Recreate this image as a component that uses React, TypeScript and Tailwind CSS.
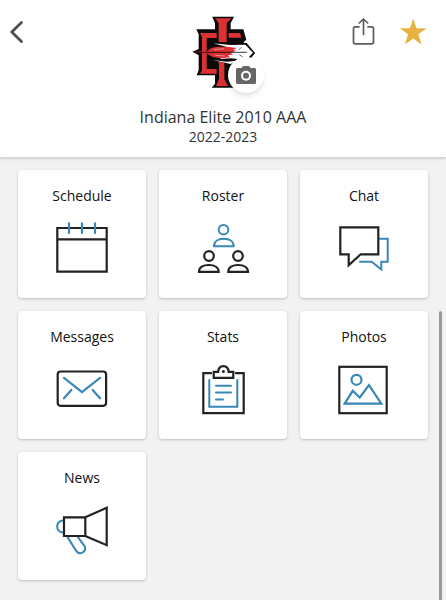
import React from 'react';

type Tile = {
  label: string;
  href: string;
  icon: React.ReactNode;
};

const BLUE = '#3a87b7';

const tiles: Tile[] = [
  {
    label: 'Schedule',
    href: '#schedule',
    icon: (
      <>
        <path d="M5.3 10H54.7V53.7H5.3ZM5.3 21.3H54.7" />
        <path d="M17 5.3V15M30 5.3V15M43 5.3V15" stroke={BLUE} />
      </>
    ),
  },
  {
    label: 'Roster',
    href: '#roster',
    icon: (
      <>
        <g stroke={BLUE} strokeWidth="2">
          <circle cx="30.5" cy="11.7" r="4.8" />
          <path d="M21 28.2C21 23.5 25 20.8 30.8 20.8S40.7 23.5 40.7 28.2Z" />
        </g>
        <circle cx="16" cy="38" r="4.8" />
        <path d="M6 53.8C6 49.5 10 47 15.9 47S25.7 49.5 25.7 53.8Z" />
        <circle cx="45" cy="38" r="4.8" />
        <path d="M35.3 53.8C35.3 49.5 39.3 47 45.2 47S55 49.5 55 53.8Z" />
      </>
    ),
  },
  {
    label: 'Chat',
    href: '#chat',
    icon: (
      <>
        <path d="M45.5 20.7H53.7V43.7H47.3V51.5L37.7 43.7H26" stroke={BLUE} strokeWidth="2" />
        <path d="M6.3 9.3H44.3V36.3H26.7L14.7 47.3V36.3H6.3Z" />
      </>
    ),
  },
  {
    label: 'Messages',
    href: '#messages',
    icon: (
      <>
        <rect x="5.7" y="12.5" width="48.4" height="34.3" rx="3" />
        <path d="M12 18.8L30 33L48 18.8M19.3 31L12 39.3M40.7 31L48 39.3" stroke={BLUE} />
      </>
    ),
  },
  {
    label: 'Stats',
    href: '#stats',
    icon: (
      <>
        <path d="M18 14.2H10.3V54.2H50.7V14.2H43" />
        <path d="M20.7 12.8H25.2C25.4 9.5 27.4 7.2 30.4 7.2S35.4 9.5 35.6 12.8H40.3V18.8H20.7Z" />
        <circle cx="30.4" cy="12.6" r="1.5" fill="#222" stroke="none" />
        <path d="M16.3 21V47.8H44.3V21M23 26.8H38M23 33.5H38M23 40.5H30" stroke={BLUE} strokeWidth="2" />
      </>
    ),
  },
  {
    label: 'Photos',
    href: '#photos',
    icon: (
      <>
        <rect x="5.3" y="7.8" width="47.4" height="46.4" />
        <circle cx="22.5" cy="20.8" r="5" stroke={BLUE} />
        <path d="M10.7 44.7L18.7 31.8L25.7 38.5L35 26.2L47.3 44.7Z" stroke={BLUE} />
      </>
    ),
  },
  {
    label: 'News',
    href: '#news',
    icon: (
      <>
        <path d="M10.8 20.4C7 21 5.2 23.5 5.2 26.4S7 31.8 10.8 32.4" stroke={BLUE} strokeWidth="2" />
        <path d="M15.7 37.4L24 50.6C27.5 56 35.5 51.5 32.7 46.4L25.8 36.8" stroke={BLUE} strokeWidth="2" />
        <path d="M12 17.3H33.3V36H12ZM33.3 17.3L54.7 7.8V45.2L33.3 36" />
      </>
    ),
  },
];

function TeamLogo() {
  return (
    <svg viewBox="30 30 198 222" className="h-[74px] w-[66px]" role="img" aria-label="Team logo">
      <path
        fill="#0c0a0a"
        d="M97 35H162L152 55V73H190L199 104L190 112L224 144L205 168L198 192L192 210H152V236L162 248H95L105 236V211H50L56 195V151L37 140L56 132V88L49 73H105V55Z"
      />
      {/* letters */}
      <path
        fill="#dc3033"
        d="M106 40H154L140 55V114H133V222L144 243H108L117 222V176H116V55ZM60 84H110V99H80V192H110V206H60L66 196V96ZM146 84H180L184 98H146Z"
      />
      {/* feather */}
      <path fill="#0c0a0a" d="M86 130L98 110L200 114L225 144L204 170L150 178L84 162Z" />
      <path fill="#fff" d="M100 115L150 120L196 119L219 143L204 159L180 163L152 160L120 162L150 128Z" />
      <path fill="#fff" d="M98 165L140 170L172 167L152 177Z" />
      <path
        fill="#dc3033"
        d="M40 141L82 138L94 129L112 125L148 126L170 129L160 134L168 137L152 143L159 149L144 150L150 157L124 160L98 156L82 146Z"
      />
      <path stroke="#0c0a0a" strokeWidth="2.5" fill="none" d="M50 142L200 142" />
      <path stroke="#f4b9b9" strokeWidth="2" fill="none" d="M102 134L132 131M106 151L134 153" />
      <path stroke="#0c0a0a" strokeWidth="2" fill="none" d="M176 135L184 127M178 149L188 156" />
    </svg>
  );
}

function Header() {
  return (
    <header className="border-b border-[#d4d4d4] bg-white px-1 pt-[15px] pb-3 shadow-sm">
      <div className="grid grid-cols-[1fr_auto_1fr] items-start">
        <button type="button" aria-label="Back" className="mt-[5px] justify-self-start">
          <svg viewBox="0 0 24 24" className="size-6" fill="none" stroke="#505050" strokeWidth="2.8" strokeLinecap="round" strokeLinejoin="round">
            <path d="M17.5 2.5L7.7 12L17.5 21.5" />
          </svg>
        </button>

        <div className="relative">
          <TeamLogo />
          <button
            type="button"
            aria-label="Change team photo"
            className="absolute top-[42px] left-[38px] flex size-9 items-center justify-center rounded-full bg-white shadow-md"
          >
            <svg viewBox="0 0 22 20" className="h-5 w-[22px]">
              <path fill="#666" d="M6.5 3L8 1H14L15.5 3H19.5Q21 3 21 4.5V17.5Q21 19 19.5 19H2.5Q1 19 1 17.5V4.5Q1 3 2.5 3Z" />
              <circle cx="11" cy="10.8" r="5" fill="#fff" />
              <circle cx="11" cy="10.8" r="3" fill="#666" />
            </svg>
          </button>
        </div>

        <div className="mt-0.5 flex gap-5 justify-self-end pr-3.5">
          <button type="button" aria-label="Share">
            <svg viewBox="0 0 30 30" className="size-[30px]" fill="none" stroke="#5c5c5c" strokeWidth="1.7" strokeLinecap="round" strokeLinejoin="round">
              <path d="M11 9.8H7.5Q5.5 9.8 5.5 11.8V24.8Q5.5 26.8 7.5 26.8H23.5Q25.5 26.8 25.5 24.8V11.8Q25.5 9.8 23.5 9.8H20" />
              <path d="M15.5 17.5V2M11.3 6L15.5 2L19.7 6" />
            </svg>
          </button>
          <button type="button" aria-label="Favorite">
            <svg viewBox="0 0 30 30" className="size-[30px]">
              <path fill="#e6b33f" d="M15.2 1.5L18.4 11.2H28.6L20.4 17.3L23.5 27.5L15.2 21.4L6.9 27.5L10 17.3L1.8 11.2H12Z" />
            </svg>
          </button>
        </div>
      </div>

      <div className="mt-4 text-center text-[#333]">
        <h1 className="text-base leading-6">Indiana Elite 2010 AAA</h1>
        <p className="text-sm leading-4">2022-2023</p>
      </div>
    </header>
  );
}

export default function App() {
  return (
    <div className="relative min-h-screen bg-[#f2f2f2] font-['Open_Sans','Noto_Sans',sans-serif]">
      <Header />

      <main className="px-[18px] pt-3 pb-5">
        <nav className="grid grid-cols-3 gap-[13px]">
          {tiles.map((tile) => (
            <a
              key={tile.label}
              href={tile.href}
              className="flex aspect-square flex-col items-center gap-3 rounded-sm bg-white pt-4 shadow-[0_1px_3px_rgba(0,0,0,0.22)]"
            >
              <span className="text-sm leading-5 text-[#111]">{tile.label}</span>
              <svg viewBox="0 0 60 60" className="size-[60px]" fill="none" stroke="#222" strokeWidth="2.2" strokeLinecap="round" aria-hidden="true">
                {tile.icon}
              </svg>
            </a>
          ))}
        </nav>
      </main>

      {/* scroll thumb */}
      <div className="absolute top-[311px] right-1 bottom-0 w-[3px] rounded-t-full bg-[#999]" />
    </div>
  );
}
